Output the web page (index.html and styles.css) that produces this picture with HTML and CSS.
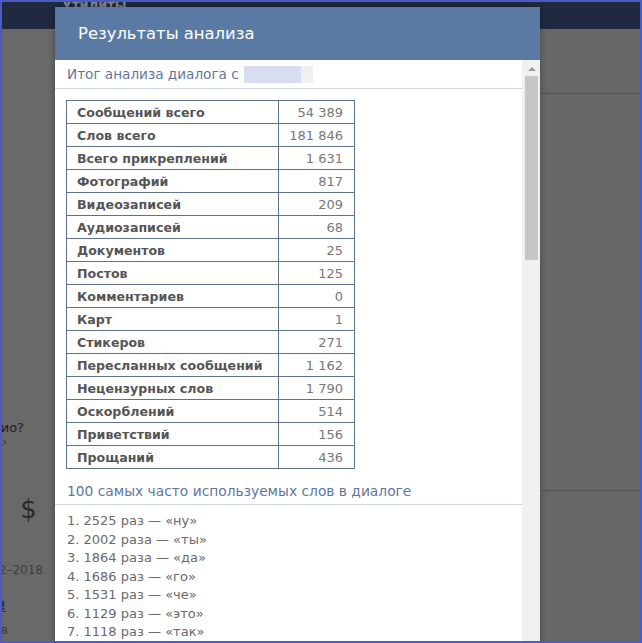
FILE: index.html
```html
<!DOCTYPE html>
<html lang="ru">
<head>
    <meta charset="UTF-8">
    <title>Результаты анализа</title>
    <link rel="stylesheet" href="styles.css">
</head>
<body>
<div class="screen">
    <div class="topbar">
        <span class="topbar__title">Утилиты</span>
    </div>

    <div class="backdrop">
        <div class="side">
            <div class="side__line side__line--q">Радио?</div>
            <div class="side__line side__line--link">›</div>
            <div class="side__line side__line--icon">$</div>
            <div class="side__line side__line--years">2012–2018</div>
            <div class="side__line side__line--bold">Отлично!</div>
            <div class="side__line side__line--muted">Отзывов</div>
        </div>
        <div class="page">
            <div class="page__block page__block--top"></div>
            <div class="page__block page__block--mid"></div>
            <div class="page__block"></div>
        </div>
    </div>

    <div class="modal">
        <div class="modal__header">Результаты анализа</div>
        <div class="modal__body">
            <div class="modal__content">
                <div class="section-title">
                    Итог анализа диалога с
                    <span class="blurred"><span class="blurred__a"></span><span class="blurred__b"></span></span>
                </div>

                <table class="stats">
                    <colgroup>
                        <col class="stats__label-col">
                        <col>
                    </colgroup>
                    <tr><td>Сообщений всего</td><td>54 389</td></tr>
                    <tr><td>Слов всего</td><td>181 846</td></tr>
                    <tr><td>Всего прикреплений</td><td>1 631</td></tr>
                    <tr><td>Фотографий</td><td>817</td></tr>
                    <tr><td>Видеозаписей</td><td>209</td></tr>
                    <tr><td>Аудиозаписей</td><td>68</td></tr>
                    <tr><td>Документов</td><td>25</td></tr>
                    <tr><td>Постов</td><td>125</td></tr>
                    <tr><td>Комментариев</td><td>0</td></tr>
                    <tr><td>Карт</td><td>1</td></tr>
                    <tr><td>Стикеров</td><td>271</td></tr>
                    <tr><td>Пересланных сообщений</td><td>1 162</td></tr>
                    <tr><td>Нецензурных слов</td><td>1 790</td></tr>
                    <tr><td>Оскорблений</td><td>514</td></tr>
                    <tr><td>Приветствий</td><td>156</td></tr>
                    <tr><td>Прощаний</td><td>436</td></tr>
                </table>

                <div class="section-title section-title--words">100 самых часто используемых слов в диалоге</div>

                <ol class="words">
                    <li>1. 2525 раз — «ну»</li>
                    <li>2. 2002 раза — «ты»</li>
                    <li>3. 1864 раза — «да»</li>
                    <li>4. 1686 раз — «го»</li>
                    <li>5. 1531 раз — «че»</li>
                    <li>6. 1129 раз — «это»</li>
                    <li>7. 1118 раз — «так»</li>
                    <li>8. 1040 раз — «не»</li>
                </ol>
            </div>

            <div class="scrollbar">
                <div class="scrollbar__arrow"></div>
                <div class="scrollbar__thumb"></div>
            </div>
        </div>
    </div>
</div>
</body>
</html>
```

FILE: styles.css
```css
html {
    box-sizing: border-box;
}

*,
*::before,
*::after {
    box-sizing: inherit;
}

body {
    margin: 0;
    overflow: hidden;
    font-family: "DejaVu Sans", Verdana, sans-serif;
}

.screen {
    position: relative;
    width: 642px;
    height: 643px;
    border: 2px solid #4b5bc2;
    background-color: #676767;
    overflow: hidden;
    display: flex;
    flex-direction: column;
}

.topbar {
    height: 27px;
    flex-shrink: 0;
    background-color: #1f2a40;
    padding-left: 60px;
}

.topbar__title {
    display: block;
    margin-top: -3px;
    font-size: 13px;
    font-weight: bold;
    line-height: 12px;
    color: #7f889b;
}

.backdrop {
    flex: 1;
    display: flex;
}

.side {
    width: 53px;
    flex-shrink: 0;
    overflow: hidden;
    background-color: #696969;
    padding-top: 391px;
}

.side__line {
    display: flex;
    justify-content: flex-end;
    white-space: nowrap;
    font-size: 13px;
    color: #1d1d1d;
}

.side__line--q {
    padding-right: 31px;
    line-height: 16px;
}

.side__line--link {
    padding-right: 48px;
    line-height: 12px;
    color: #2b3c78;
}

.side__line--icon {
    justify-content: center;
    margin-top: 46px;
    font-size: 26px;
    line-height: 30px;
    color: #2a2a2a;
}

.side__line--years {
    margin-top: 38px;
    padding-right: 12px;
    font-size: 12px;
    line-height: 16px;
    color: #3e3e3e;
}

.side__line--bold {
    margin-top: 20px;
    padding-right: 49px;
    font-weight: bold;
    line-height: 16px;
    color: #23306b;
    text-decoration: underline;
}

.side__line--muted {
    margin-top: 8px;
    padding-right: 47px;
    font-size: 12px;
    line-height: 16px;
    color: #3e3e3e;
}

.page {
    flex: 1;
}

.page__block--top {
    height: 65px;
    border-bottom: 1px solid #555;
}

.page__block--mid {
    height: 397px;
    border-bottom: 1px solid #555;
}

.modal {
    position: absolute;
    left: 53px;
    top: 5px;
    width: 485px;
    height: 660px;
    background-color: #fff;
    box-shadow: 0 0 6px rgba(0, 0, 0, 0.35);
    display: flex;
    flex-direction: column;
}

.modal__header {
    height: 53px;
    flex-shrink: 0;
    display: flex;
    align-items: center;
    padding-left: 23px;
    background-color: #5a7aa4;
    color: #fff;
    font-size: 16.4px;
}

.modal__body {
    flex: 1;
    display: flex;
}

.modal__content {
    flex: 1;
}

.section-title {
    height: 29px;
    display: flex;
    align-items: center;
    padding: 0 12px;
    border-bottom: 1px solid #cdd4de;
    font-size: 13.6px;
    color: #5d779c;
}

.section-title--words {
    height: 28px;
    margin-top: 8px;
    font-size: 13.8px;
}

.blurred {
    display: flex;
    margin-left: 5px;
}

.blurred__a {
    width: 57px;
    height: 17px;
    background-color: #d9ddf0;
}

.blurred__b {
    width: 12px;
    height: 17px;
    background-color: #eef0f4;
}

.stats {
    margin: 11px 0 0 11px;
    width: 289px;
    table-layout: fixed;
    border-collapse: collapse;
    border: 1px solid #5d7189;
    font-size: 13px;
}

.stats__label-col {
    width: 212px;
}

.stats td {
    height: 23px;
    padding: 0 11px 0 10px;
    border: 1px solid #5d7189;
    white-space: nowrap;
    color: #777;
    text-align: right;
}

.stats td:first-child {
    padding-right: 0;
    font-size: 12.6px;
    font-weight: bold;
    color: #555;
    text-align: left;
}

.words {
    list-style: none;
    margin: 0;
    padding: 7px 12px 0;
    font-size: 13px;
    line-height: 18.5px;
    color: #6a6a6a;
}

.scrollbar {
    width: 18px;
    flex-shrink: 0;
    padding: 4px 2px 0 3px;
    background-image: repeating-conic-gradient(#ebebeb 0 25%, #f7f7f7 0 50%);
    background-size: 2px 2px;
}

.scrollbar__arrow {
    width: 0;
    height: 0;
    margin: 3px auto 5px;
    border-left: 4px solid transparent;
    border-right: 4px solid transparent;
    border-bottom: 4px solid #9c9c9c;
}

.scrollbar__thumb {
    height: 184px;
    background-color: #c6c6c6;
}
```
